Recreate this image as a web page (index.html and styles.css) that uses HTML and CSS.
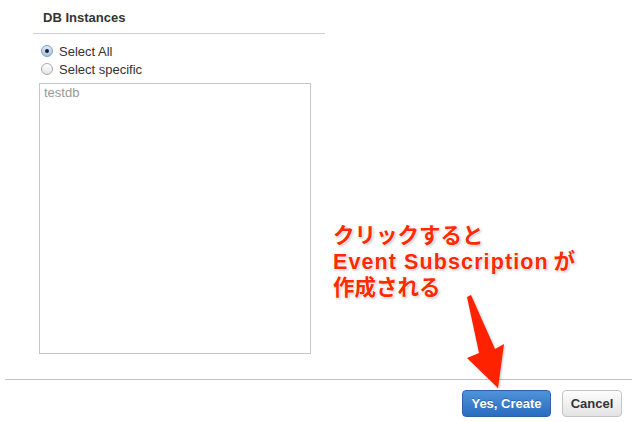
FILE: index.html
```html
<!DOCTYPE html>
<html lang="ja">
<head>
<meta charset="utf-8">
<title>DB Instances</title>
<link rel="stylesheet" href="styles.css">
</head>
<body>
<div class="page">
  <section class="section">
    <h2 class="section-title">DB Instances</h2>
    <div class="options">
      <label class="option"><span class="radio checked"></span>Select All</label>
      <label class="option"><span class="radio"></span>Select specific</label>
    </div>
    <div class="listbox">
      <div class="list-item">testdb</div>
    </div>
  </section>

  <footer class="footer">
    <button class="btn btn-primary">Yes, Create</button>
    <button class="btn btn-default">Cancel</button>
  </footer>

  <div class="note">
    <div class="note-line">クリックすると</div>
    <div class="note-line"><span class="note-latin">Event Subscription</span> が</div>
    <div class="note-line">作成される</div>
  </div>
  <svg class="arrow" width="60" height="100" viewBox="455 290 60 100">
    <polygon points="467,297 471,295 495,349 504,344 498,388 467,358 479,353" fill="#ff2200"/>
  </svg>
</div>
</body>
</html>
```

FILE: styles.css
```css
html, body {
  margin: 0;
  padding: 0;
  background: #ffffff;
}

.page {
  position: relative;
  width: 640px;
  height: 422px;
  font-family: "Liberation Sans", Arial, sans-serif;
  color: #333;
  overflow: hidden;
}

.section {
  margin-left: 33px;
  width: 292px;
}

.section-title {
  margin: 0;
  padding: 10px 0 7px 10px;
  font-size: 13px;
  line-height: 16px;
  font-weight: bold;
  color: #333;
  border-bottom: 1px solid #cfcfcf;
}

.options {
  margin-top: 8px;
  margin-left: 8px;
  display: flex;
  flex-direction: column;
}

.option {
  display: flex;
  align-items: center;
  height: 18px;
  font-size: 13px;
  color: #333;
}

.radio {
  box-sizing: border-box;
  width: 12px;
  height: 12px;
  border-radius: 50%;
  border: 1px solid #a9a9a9;
  background: linear-gradient(#ffffff, #e4e4e4);
  margin-right: 6px;
  display: flex;
  align-items: center;
  justify-content: center;
}

.radio.checked {
  border-color: #7d9cc4;
  background: linear-gradient(#dfeafa, #a9c3e8);
}

.radio.checked::after {
  content: "";
  width: 4px;
  height: 4px;
  border-radius: 50%;
  background: #222;
}

.listbox {
  box-sizing: border-box;
  margin-top: 5px;
  margin-left: 6px;
  width: 272px;
  height: 271px;
  border: 1px solid #c6c6c6;
  background: #fff;
  padding: 1px 4px;
}

.list-item {
  font-size: 13px;
  line-height: 16px;
  color: #999;
}

.footer {
  margin: 25px 8px 0 5px;
  border-top: 1px solid #c2c2c2;
  padding: 10px 10px 0 0;
  display: flex;
  justify-content: flex-end;
  gap: 11px;
}

.btn {
  box-sizing: border-box;
  height: 27px;
  border-radius: 4px;
  font-family: "Liberation Sans", Arial, sans-serif;
  font-size: 13px;
  font-weight: bold;
  padding: 0;
  cursor: pointer;
}

.btn-primary {
  width: 89px;
  color: #fff;
  border: 1px solid #2d62a8;
  background: linear-gradient(#4e93da, #2a6cc0);
  text-shadow: 0 -1px 0 rgba(0, 0, 0, 0.25);
}

.btn-default {
  width: 60px;
  color: #333;
  border: 1px solid #c4c4c4;
  background: linear-gradient(#fdfdfd, #e3e3e3);
}

.note {
  position: absolute;
  left: 333px;
  top: 221px;
  display: flex;
  flex-direction: column;
  font-family: "Noto Sans CJK JP", sans-serif;
  font-size: 21.5px;
  font-weight: bold;
  color: #ff2a00;
  text-shadow: 0 0 2px #fff, 0 0 3px #fff, 1px 1px 3px rgba(0, 0, 0, 0.35);
  white-space: nowrap;
}

.note-line {
  height: 26px;
  line-height: 26px;
}

.note-latin {
  font-family: "Liberation Sans", sans-serif;
  font-weight: bold;
  letter-spacing: 1.1px;
}

.arrow {
  position: absolute;
  left: 455px;
  top: 290px;
  filter: drop-shadow(1px 1px 1px rgba(0, 0, 0, 0.25));
}
```
